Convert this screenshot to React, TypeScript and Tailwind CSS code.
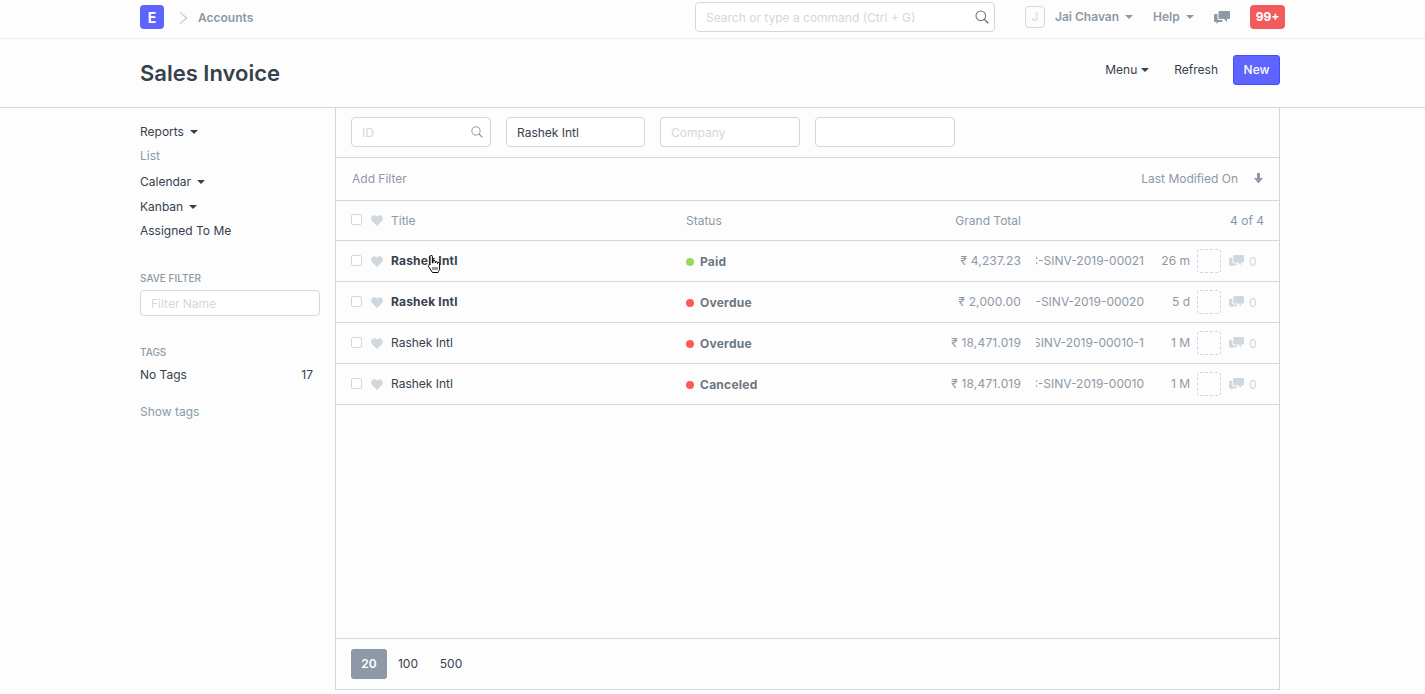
import React from "react";

const Caret = ({ c = "border-t-[#36414c]" }: { c?: string }) => (
  <span className={`inline-block w-0 h-0 border-x-[4px] border-x-transparent border-t-[4px] ${c}`} />
);

const Comment = ({ color, w = 16 }: { color: string; w?: number }) => (
  <svg width={w} height={(w * 13) / 16} viewBox="0 0 16 13" fill={color}>
    <path d="M5.500 0h9.500a1 1 0 0 1 1 1v6a1 1 0 0 1-1 1h-2v3L10 8H5.500a1 1 0 0 1-1-1V1a1 1 0 0 1 1-1z" />
    <path d="M1 3h2.500v4.500a1.500 1.500 0 0 0 1.500 1.500h3.500v1a1 1 0 0 1-1 1H4.500L2.500 13V11H1a1 1 0 0 1-1-1V4a1 1 0 0 1 1-1z" />
  </svg>
);

const Search = ({ size, color }: { size: number; color: string }) => (
  <svg width={size} height={size} viewBox="0 0 14 14" fill="none" stroke={color} strokeWidth="1.1">
    <circle cx="5.800" cy="5.800" r="4.800" />
    <path d="M9.300 9.300L13.300 13.300" strokeWidth="1.400" />
  </svg>
);

const Heart = () => (
  <svg width="12" height="11" viewBox="0 0 12 11" fill="#d1d8dd" className="shrink-0">
    <path d="M6 11L1 6.100C-0.300 4.800-0.300 2.600 1 1.200 2.300-0.100 4.400-0.100 5.700 1.200L6 1.500l.3-.3C7.600-0.100 9.700-0.100 11 1.200c1.300 1.400 1.300 3.600 0 4.900z" />
  </svg>
);

const Check = () => (
  <span className="block w-[11px] h-[11px] -mt-[2px] border border-[#d1d8dd] rounded-[2px] bg-white shrink-0" />
);

const Filter = ({ ph, v, search, narrow }: { ph?: string; v?: string; search?: boolean; narrow?: boolean }) => (
  <div className={`relative ${narrow ? "w-[139px]" : "w-[140px]"} h-[30px] border border-[#d1d8dd] rounded-[4px] bg-white flex items-center px-[10px] pt-[1px] text-[12px]`}>
    {v ? <span className="text-[#36414c]">{v}</span> : <span className="text-[#d1d8dd]">{ph}</span>}
    {search && (
      <span className="absolute right-[7px] top-[8px] flex">
        <Search size={12} color="#8d99a6" />
      </span>
    )}
  </div>
);

const rows = [
  { title: "Rashek Intl", bold: true, status: "Paid", dot: "bg-[#98d85b]", total: "₹ 4,237.23", id: "ACC-SINV-2019-00021", time: "26 m", cursor: true },
  { title: "Rashek Intl", bold: true, status: "Overdue", dot: "bg-[#ff5858]", total: "₹ 2,000.00", id: "ACC-SINV-2019-00020", time: "5 d" },
  { title: "Rashek Intl", status: "Overdue", dot: "bg-[#ff5858]", total: "₹ 18,471.019", id: "ACC-SINV-2019-00010-1", time: "1 M" },
  { title: "Rashek Intl", status: "Canceled", dot: "bg-[#ff5858]", total: "₹ 18,471.019", id: "ACC-SINV-2019-00010", time: "1 M" },
];

export default function App() {
  return (
    <div className="min-h-[694px] bg-[#fdfdfd] text-[#36414c] text-[12px] font-['Inter','Liberation_Sans',sans-serif]">
      <nav className="h-[39px] border-b border-[#ebeff2]">
        <div className="w-[1145px] ml-[140px] h-[38px] flex items-center whitespace-nowrap">
          <div className="w-6 h-6 shrink-0 rounded-[4px] bg-[#5e64ff] text-white font-bold text-[14px] flex items-center justify-center mb-[4px]">E</div>
          <svg width="9" height="14" viewBox="0 0 10 15" fill="none" stroke="#c0c9d2" strokeWidth="1.300" className="ml-[15px] mb-[2px] shrink-0">
            <path d="M1 1l7.500 6.500L1 14" />
          </svg>
          <span className="ml-[10px] w-[56px] shrink-0 font-semibold text-[#8d99a6] mt-[-2px]">Accounts</span>
          <div className="ml-[441px] relative w-[300px] h-[30px] shrink-0 mb-[4px] border border-[#d1d8dd] rounded-[4px] bg-white flex items-center px-[10px] pt-[1px] text-[#d1d8dd]">
            Search or type a command (Ctrl + G)
            <span className="absolute right-[5px] top-[7px] flex">
              <Search size={14} color="#6c7680" />
            </span>
          </div>
          <span className="ml-[30px] w-5 h-[22px] shrink-0 border border-[#d1d8dd] rounded-[4px] flex items-center justify-center text-[#d1d8dd] text-[12px] mb-[4px]">J</span>
          <span className="ml-[10px] w-[66px] shrink-0 font-semibold text-[#8d99a6] mb-[4px]">Jai Chavan</span>
          <span className="ml-[4px] mb-[4px] flex shrink-0"><Caret c="border-t-[#8d99a6]" /></span>
          <span className="ml-[20px] w-[28px] shrink-0 font-semibold text-[#8d99a6] mb-[4px]">Help</span>
          <span className="ml-[5px] mb-[4px] flex shrink-0"><Caret c="border-t-[#8d99a6]" /></span>
          <span className="ml-[20px] mb-[4px] flex shrink-0"><Comment color="#8d99a6" /></span>
          <span className="ml-[20px] w-[35px] h-6 shrink-0 mb-[4px] rounded-[4px] bg-[#f25b5b] text-white font-bold text-[12px] flex items-center justify-center">99+</span>
        </div>
      </nav>

      <header className="h-[69px] border-b border-[#d1d8dd]">
        <div className="w-[1140px] ml-[140px] h-full flex items-center">
          <h1 className="text-[22px] font-semibold text-[#36414c] leading-none">Sales Invoice</h1>
          <div className="ml-auto flex items-center -mt-[6px]">
            <span>Menu</span>
            <span className="ml-[4px] flex"><Caret /></span>
            <span className="ml-[25px]">Refresh</span>
            <span className="ml-[15px] w-[47px] h-[30px] rounded-[3px] bg-[#5e64ff] border border-[#444bff] text-white font-medium flex items-center justify-center">New</span>
          </div>
        </div>
      </header>

      <div className="w-[1140px] ml-[140px] flex">
        <aside className="w-[195px] shrink-0 text-[12px]">
          <div className="pt-[15px] pr-[15px]">
            <div className="h-[18px] flex items-center gap-[6px]">Reports <Caret /></div>
            <div className="h-[18px] mt-[6px] flex items-center text-[#8d99a6]">List</div>
            <div className="h-[18px] mt-[8px] flex items-center gap-[6px]">Calendar <Caret /></div>
            <div className="h-[18px] mt-[7px] flex items-center gap-[6px]">Kanban <Caret /></div>
            <div className="h-[18px] mt-[6px] flex items-center">Assigned To Me</div>
            <div className="mt-[32px] text-[10px] leading-[12px] font-medium text-[#8d99a6]">SAVE FILTER</div>
            <div className="mt-[6px] h-[26px] border border-[#d1d8dd] rounded-[4px] bg-white flex items-center px-[10px] pt-[1px] text-[#d1d8dd]">Filter Name</div>
            <div className="mt-[30px] text-[10px] leading-[12px] font-medium text-[#8d99a6]">TAGS</div>
            <div className="mt-[8px] h-[18px] flex items-center justify-between pr-[7px]">
              <span>No Tags</span><span>17</span>
            </div>
            <div className="mt-[19px] h-[18px] flex items-center text-[#8d99a6]">Show tags</div>
          </div>
        </aside>

        <main className="w-[945px] h-[582px] border-x border-b border-[#d1d8dd] flex flex-col">
          <div className="h-[50px] shrink-0 border-b border-[#d1d8dd] flex items-center gap-[15px] px-[15px] pb-[1px]">
            <Filter ph="ID" search />
            <Filter v="Rashek Intl" narrow />
            <Filter ph="Company" />
            <Filter />
          </div>
          <div className="h-[43px] shrink-0 border-b border-[#d1d8dd] flex items-center pl-[16px] pr-[16px] text-[#8d99a6]">
            <span>Add Filter</span>
            <span className="ml-auto">Last Modified On</span>
            <svg width="9" height="11" viewBox="0 0 9 11" fill="#8d99a6" className="ml-[16px] mb-[2px]">
              <path d="M3 0h3v5h3L4.500 10.500 0 5h3z" />
            </svg>
          </div>
          <div className="h-[40px] shrink-0 border-b border-[#d1d8dd] flex items-center pl-[15px] pr-[15px] text-[#8d99a6]">
            <Check />
            <span className="ml-[9px] flex"><Heart /></span>
            <span className="ml-[8px] w-[295px]">Title</span>
            <span className="w-[335px] flex justify-between">
              <span>Status</span>
              <span>Grand Total</span>
            </span>
            <span className="ml-auto">4 of 4</span>
          </div>
          {rows.map((r, i) => (
            <div key={i} className="h-[41px] shrink-0 border-b border-[#d1d8dd] flex items-center pl-[15px] text-[#6c7680]">
              <Check />
              <span className="ml-[9px] flex"><Heart /></span>
              <span className={`relative ml-[8px] w-[295px] ${r.bold ? "font-bold tracking-[0.2px] text-[#36414c]" : "text-[#36414c]"}`}>
                {r.title}
                {r.cursor && (
                  <svg width="15" height="19" viewBox="0 0 15 19" className="absolute left-[36px] top-[3px]" fill="#fff" stroke="#000" strokeWidth="1">
                    <path d="M3 1.500a1.200 1.200 0 0 1 2.400 0V8l.6-.2V6.500a1.100 1.100 0 0 1 2.200 0v1.200a1.100 1.100 0 0 1 2.200 0v.8a1.100 1.100 0 0 1 2.200 0V13c0 2-1 3-1.500 4.500H5.500L1.500 11.500c-.8-1.300.8-2.500 1.500-1.500z" />
                    <path d="M6 12v3M8 12v3M10 12v3" strokeWidth="0.800" />
                  </svg>
                )}
              </span>
              <span className="w-[215px] flex items-center font-bold tracking-[0.25px] text-[#6c7680] mt-[1px]">
                <span className={`w-2 h-2 rounded-full ${r.dot} mr-[6px]`} />
                {r.status}
              </span>
              <span className="w-[120px] text-right tracking-[0.15px] text-[#8d99a6]">{r.total}</span>
              <span className="ml-[15px] w-[108px] text-[#8d99a6] overflow-hidden whitespace-nowrap flex justify-end">
                <span className="shrink-0">{r.id}</span>
              </span>
              <span className="w-[46px] text-right text-[#8d99a6]">{r.time}</span>
              <span className="ml-[7px] w-6 h-6 border border-dashed border-[#d1d8dd] rounded-[3px] shrink-0" />
              <span className="ml-[8px] mt-[1px] flex"><Comment color="#d1d8dd" w={15} /></span>
              <span className="ml-[5px] mt-[1px] text-[#d1d8dd]">0</span>
            </div>
          ))}
          <div className="mt-auto h-[51px] border-t border-[#d1d8dd] flex items-center px-[15px]">
            <span className="w-9 h-[30px] rounded-[3px] bg-[#8d99a6] text-white font-semibold flex items-center justify-center">20</span>
            <span className="w-[42px] h-[30px] flex items-center justify-center">100</span>
            <span className="w-[44px] h-[30px] flex items-center justify-center">500</span>
          </div>
        </main>
      </div>
    </div>
  );
}
